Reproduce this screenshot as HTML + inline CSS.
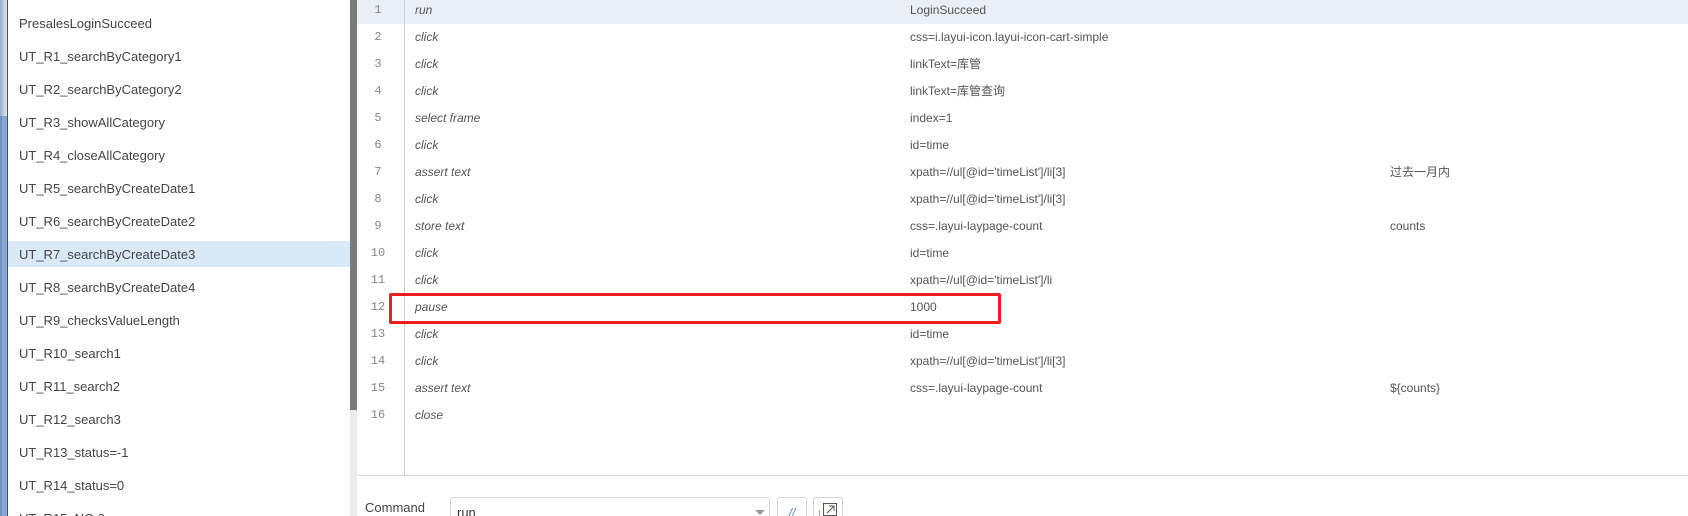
<!DOCTYPE html>
<html><head><meta charset="utf-8"><style>
*{margin:0;padding:0;box-sizing:border-box}
html,body{width:1688px;height:516px;overflow:hidden}
body{background:#fff;position:relative;font-family:"Liberation Sans","Noto Sans CJK SC",sans-serif;color:#555}
.abs{position:absolute}
.li{position:absolute;left:19px;font-size:13px;color:#444;line-height:16px;white-space:nowrap}
.row{position:absolute;left:357px;right:0;height:27px;font-size:12px;line-height:27px}
.row .n{position:absolute;left:0;width:42px;text-align:center;font-family:"Liberation Mono",monospace;color:#888;font-size:12px}
.row .c{position:absolute;left:58px;font-style:italic;color:#555}
.row .t{position:absolute;left:553px;color:#555;white-space:nowrap}
.row .v{position:absolute;left:1033px;color:#555;white-space:nowrap}
</style></head><body>
<div class="abs" style="left:0;top:0;width:7px;height:116px;background:linear-gradient(90deg,#9aaec8,#dfe6ef)"></div>
<div class="abs" style="left:0;top:116px;width:7px;height:400px;background:#87a5cf;border-left:2px solid #6f8fbd"></div>
<div class="abs" style="left:7px;top:0;width:1px;height:516px;background:#4a5060"></div>
<div class="abs" style="left:8px;top:241px;width:342px;height:26px;background:#d9e9f8"></div>
<div class="li" style="top:16px">PresalesLoginSucceed</div>
<div class="li" style="top:49px">UT_R1_searchByCategory1</div>
<div class="li" style="top:82px">UT_R2_searchByCategory2</div>
<div class="li" style="top:115px">UT_R3_showAllCategory</div>
<div class="li" style="top:148px">UT_R4_closeAllCategory</div>
<div class="li" style="top:181px">UT_R5_searchByCreateDate1</div>
<div class="li" style="top:214px">UT_R6_searchByCreateDate2</div>
<div class="li" style="top:247px">UT_R7_searchByCreateDate3</div>
<div class="li" style="top:280px">UT_R8_searchByCreateDate4</div>
<div class="li" style="top:313px">UT_R9_checksValueLength</div>
<div class="li" style="top:346px">UT_R10_search1</div>
<div class="li" style="top:379px">UT_R11_search2</div>
<div class="li" style="top:412px">UT_R12_search3</div>
<div class="li" style="top:445px">UT_R13_status=-1</div>
<div class="li" style="top:478px">UT_R14_status=0</div>
<div class="li" style="top:511px">UT_R15_NO:0</div>
<div class="abs" style="left:350px;top:0;width:7px;height:410px;background:#7a7a7a"></div>
<div class="abs" style="left:350px;top:410px;width:7px;height:106px;background:#ececec"></div>
<div class="abs" style="left:357px;top:0;width:1331px;height:24px;background:#e8eff7"></div>
<div class="abs" style="left:404px;top:0;width:1px;height:475px;background:#d0d0d0"></div>
<div class="abs" style="left:357px;top:475px;width:1331px;height:1px;background:#d4d4d4"></div>
<div class="row" style="top:-3px"><span class="n">1</span><span class="c">run</span><span class="t">LoginSucceed</span></div>
<div class="row" style="top:24px"><span class="n">2</span><span class="c">click</span><span class="t">css=i.layui-icon.layui-icon-cart-simple</span></div>
<div class="row" style="top:51px"><span class="n">3</span><span class="c">click</span><span class="t">linkText=库管</span></div>
<div class="row" style="top:78px"><span class="n">4</span><span class="c">click</span><span class="t">linkText=库管查询</span></div>
<div class="row" style="top:105px"><span class="n">5</span><span class="c">select frame</span><span class="t">index=1</span></div>
<div class="row" style="top:132px"><span class="n">6</span><span class="c">click</span><span class="t">id=time</span></div>
<div class="row" style="top:159px"><span class="n">7</span><span class="c">assert text</span><span class="t">xpath=//ul[@id='timeList']/li[3]</span><span class="v">过去一月内</span></div>
<div class="row" style="top:186px"><span class="n">8</span><span class="c">click</span><span class="t">xpath=//ul[@id='timeList']/li[3]</span></div>
<div class="row" style="top:213px"><span class="n">9</span><span class="c">store text</span><span class="t">css=.layui-laypage-count</span><span class="v">counts</span></div>
<div class="row" style="top:240px"><span class="n">10</span><span class="c">click</span><span class="t">id=time</span></div>
<div class="row" style="top:267px"><span class="n">11</span><span class="c">click</span><span class="t">xpath=//ul[@id='timeList']/li</span></div>
<div class="row" style="top:294px"><span class="n">12</span><span class="c">pause</span><span class="t">1000</span></div>
<div class="row" style="top:321px"><span class="n">13</span><span class="c">click</span><span class="t">id=time</span></div>
<div class="row" style="top:348px"><span class="n">14</span><span class="c">click</span><span class="t">xpath=//ul[@id='timeList']/li[3]</span></div>
<div class="row" style="top:375px"><span class="n">15</span><span class="c">assert text</span><span class="t">css=.layui-laypage-count</span><span class="v">${counts}</span></div>
<div class="row" style="top:402px"><span class="n">16</span><span class="c">close</span></div>
<div class="abs" style="left:389px;top:293px;width:612px;height:31px;border:3px solid #f01d1d;border-radius:2px"></div>
<div class="abs" style="left:365px;top:500px;font-size:13px;color:#444">Command</div>
<div class="abs" style="left:450px;top:497px;width:320px;height:30px;border:1px solid #d6d6d6;border-radius:3px;font-size:13px;color:#333;padding:7px 0 0 6px">run</div>
<div class="abs" style="left:755px;top:510px;width:0;height:0;border-left:5px solid transparent;border-right:5px solid transparent;border-top:5px solid #999"></div>
<div class="abs" style="left:777px;top:497px;width:30px;height:30px;border:1px solid #d6d6d6;border-radius:3px;color:#4d7fe8;font-size:12px;font-style:italic;text-align:center;padding-top:8px">//</div>
<div class="abs" style="left:813px;top:497px;width:30px;height:30px;border:1px solid #d6d6d6;border-radius:3px"></div>
<div class="abs" style="left:823px;top:503px;width:14px;height:13px;border:1px solid #555"></div>
<svg class="abs" style="left:823px;top:503px" width="14" height="13"><path d="M4 10 L11 3 M6 3 H11 V8" stroke="#555" fill="none"/></svg>
<div class="abs" style="left:819px;top:510px;width:1px;height:6px;background:#d9a050"></div>
</body></html>
